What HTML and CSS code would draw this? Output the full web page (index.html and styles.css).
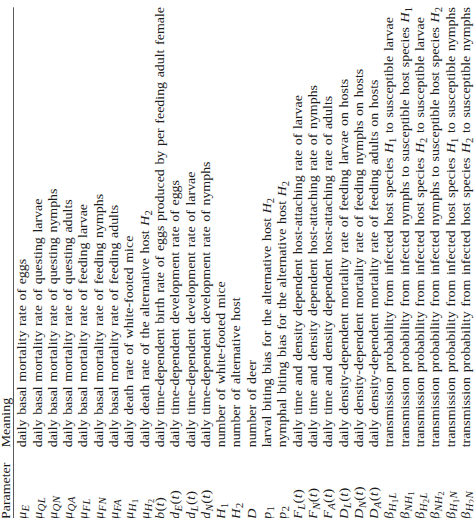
FILE: index.html
```html
<!DOCTYPE html>
<html lang="en">
<head>
<meta charset="utf-8">
<title>Parameters</title>
<link rel="stylesheet" href="styles.css">
</head>
<body>
<div class="page">
<table class="params">
<thead>
<tr><th class="c1">Parameter</th><th class="c2">Meaning</th></tr>
</thead>
<tbody>
<tr><td class="c1 sym"><span class="m">μ</span><span class="s m">E</span></td><td class="c2">daily basal mortality rate of eggs</td></tr>
<tr><td class="c1 sym"><span class="m">μ</span><span class="s m">QL</span></td><td class="c2">daily basal mortality rate of questing larvae</td></tr>
<tr><td class="c1 sym"><span class="m">μ</span><span class="s m">QN</span></td><td class="c2">daily basal mortality rate of questing nymphs</td></tr>
<tr><td class="c1 sym"><span class="m">μ</span><span class="s m">QA</span></td><td class="c2">daily basal mortality rate of questing adults</td></tr>
<tr><td class="c1 sym"><span class="m">μ</span><span class="s m">FL</span></td><td class="c2">daily basal mortality rate of feeding larvae</td></tr>
<tr><td class="c1 sym"><span class="m">μ</span><span class="s m">FN</span></td><td class="c2">daily basal mortality rate of feeding nymphs</td></tr>
<tr><td class="c1 sym"><span class="m">μ</span><span class="s m">FA</span></td><td class="c2">daily basal mortality rate of feeding adults</td></tr>
<tr><td class="c1 sym"><span class="m">μ</span><span class="s"><span class="m">H</span><span class="ss">1</span></span></td><td class="c2">daily death rate of white-footed mice</td></tr>
<tr><td class="c1 sym"><span class="m">μ</span><span class="s"><span class="m">H</span><span class="ss">2</span></span></td><td class="c2">daily death rate of the alternative host <span class="m">H</span><span class="s">2</span></td></tr>
<tr><td class="c1 sym"><span class="m">b</span>(<span class="m">t</span>)</td><td class="c2">daily time-dependent birth rate of eggs produced by per feeding adult female</td></tr>
<tr><td class="c1 sym"><span class="m">d</span><span class="s m">E</span>(<span class="m">t</span>)</td><td class="c2">daily time-dependent development rate of eggs</td></tr>
<tr><td class="c1 sym"><span class="m">d</span><span class="s m">L</span>(<span class="m">t</span>)</td><td class="c2">daily time-dependent development rate of larvae</td></tr>
<tr><td class="c1 sym"><span class="m">d</span><span class="s m">N</span>(<span class="m">t</span>)</td><td class="c2">daily time-dependent development rate of nymphs</td></tr>
<tr><td class="c1 sym"><span class="m">H</span><span class="s">1</span></td><td class="c2">number of white-footed mice</td></tr>
<tr><td class="c1 sym"><span class="m">H</span><span class="s">2</span></td><td class="c2">number of alternative host</td></tr>
<tr><td class="c1 sym"><span class="m">D</span></td><td class="c2">number of deer</td></tr>
<tr><td class="c1 sym"><span class="m">p</span><span class="s">1</span></td><td class="c2">larval biting bias for the alternative host <span class="m">H</span><span class="s">2</span></td></tr>
<tr><td class="c1 sym"><span class="m">p</span><span class="s">2</span></td><td class="c2">nymphal biting bias for the alternative host <span class="m">H</span><span class="s">2</span></td></tr>
<tr><td class="c1 sym"><span class="m">F</span><span class="s m">L</span>(<span class="m">t</span>)</td><td class="c2">daily time and density dependent host-attaching rate of larvae</td></tr>
<tr><td class="c1 sym"><span class="m">F</span><span class="s m">N</span>(<span class="m">t</span>)</td><td class="c2">daily time and density dependent host-attaching rate of nymphs</td></tr>
<tr><td class="c1 sym"><span class="m">F</span><span class="s m">A</span>(<span class="m">t</span>)</td><td class="c2">daily time and density dependent host-attaching rate of adults</td></tr>
<tr><td class="c1 sym"><span class="m">D</span><span class="s m">L</span>(<span class="m">t</span>)</td><td class="c2">daily density-dependent mortality rate of feeding larvae on hosts</td></tr>
<tr><td class="c1 sym"><span class="m">D</span><span class="s m">N</span>(<span class="m">t</span>)</td><td class="c2">daily density-dependent mortality rate of feeding nymphs on hosts</td></tr>
<tr><td class="c1 sym"><span class="m">D</span><span class="s m">A</span>(<span class="m">t</span>)</td><td class="c2">daily density-dependent mortality rate of feeding adults on hosts</td></tr>
<tr><td class="c1 sym"><span class="m">β</span><span class="s"><span class="m">H</span><span class="ss">1</span><span class="m">L</span></span></td><td class="c2">transmission probability from infected host species <span class="m">H</span><span class="s">1</span> to susceptible larvae</td></tr>
<tr><td class="c1 sym"><span class="m">β</span><span class="s"><span class="m">NH</span><span class="ss">1</span></span></td><td class="c2">transmission probability from infected nymphs to susceptible host species <span class="m">H</span><span class="s">1</span></td></tr>
<tr><td class="c1 sym"><span class="m">β</span><span class="s"><span class="m">H</span><span class="ss">2</span><span class="m">L</span></span></td><td class="c2">transmission probability from infected host species <span class="m">H</span><span class="s">2</span> to susceptible larvae</td></tr>
<tr><td class="c1 sym"><span class="m">β</span><span class="s"><span class="m">NH</span><span class="ss">2</span></span></td><td class="c2">transmission probability from infected nymphs to susceptible host species <span class="m">H</span><span class="s">2</span></td></tr>
<tr><td class="c1 sym"><span class="m">β</span><span class="s"><span class="m">H</span><span class="ss">1</span><span class="m">N</span></span></td><td class="c2">transmission probability from infected host species <span class="m">H</span><span class="s">1</span> to susceptible nymphs</td></tr>
<tr><td class="c1 sym"><span class="m">β</span><span class="s"><span class="m">H</span><span class="ss">2</span><span class="m">N</span></span></td><td class="c2">transmission probability from infected host species <span class="m">H</span><span class="s">2</span> to susceptible nymphs</td></tr>
</tbody>
</table>
</div>
</body>
</html>
```
FILE: styles.css
```css
html, body {
  margin: 0;
  padding: 0;
  background: #ffffff;
}

.page {
  width: 474px;
  height: 518px;
  overflow: hidden;
  background: #ffffff;
}

.params {
  border-collapse: collapse;
  border-spacing: 0;
  font-family: "Liberation Serif", "Times New Roman", serif;
  font-size: 13px;
  color: #1c1c1c;
  white-space: nowrap;
  word-spacing: 0.083em;
  transform-origin: 0 0;
  transform: translate(-2px, 519px) rotate(-90deg) scale(1.07, 1);
}

.params th,
.params td {
  padding: 0;
  height: 15.3px;
  line-height: 15.3px;
  text-align: left;
  font-weight: normal;
  vertical-align: middle;
}

.params thead th {
  height: 15px;
  border-bottom: 1px solid #5a5a5a;
}

.c1 {
  width: 67px;
  min-width: 67px;
}

.sym {
  font-size: 13.5px;
  letter-spacing: 0.02em;
}

.m {
  font-style: italic;
}

.s {
  font-size: 76%;
  vertical-align: -0.28em;
  line-height: 0;
}

.ss {
  font-size: 80%;
  vertical-align: -0.25em;
  line-height: 0;
  font-style: normal;
}
```
